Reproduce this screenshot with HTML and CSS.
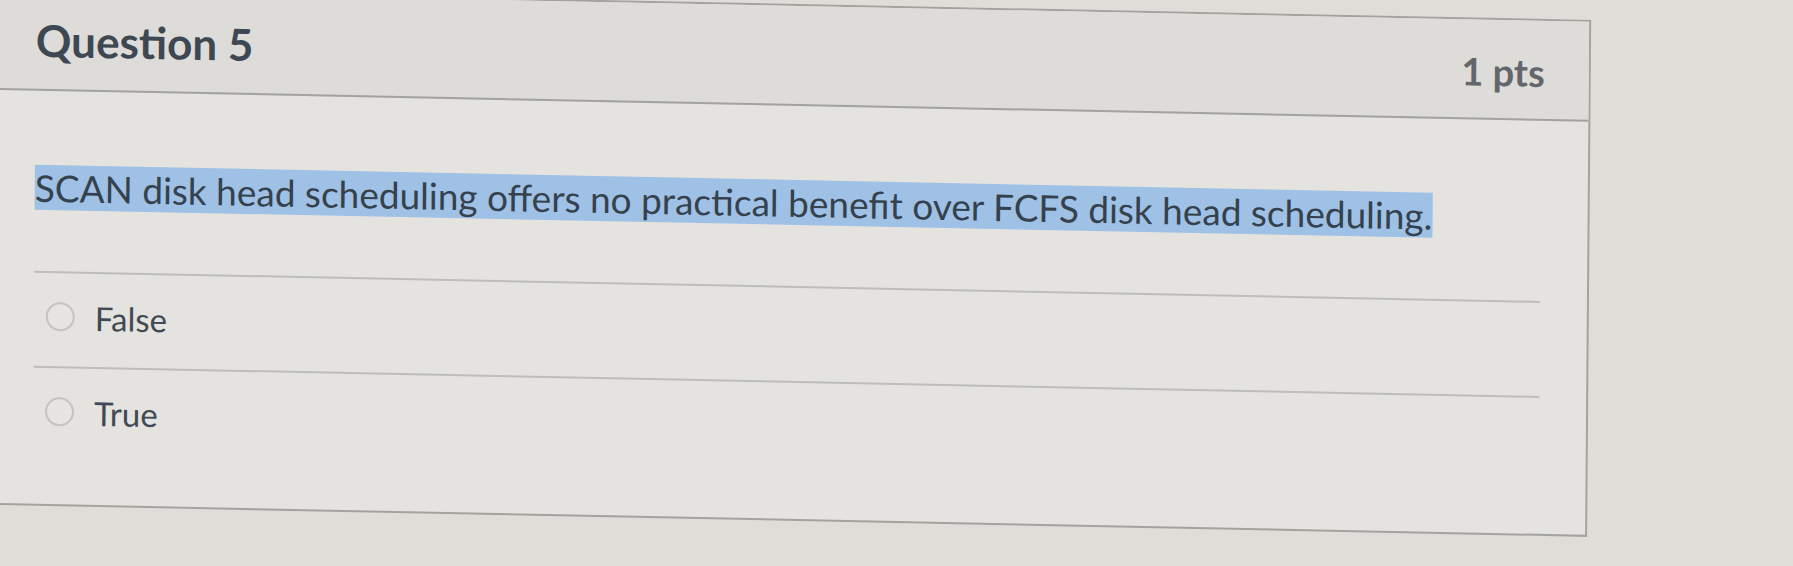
FILE: index.html
```html
<!DOCTYPE html>
<html lang="en">
<head>
    <meta charset="UTF-8">
    <meta name="viewport" content="width=device-width, initial-scale=1.0">
    <title>Quiz: Question 5</title>
    <link rel="stylesheet" href="styles.css">
</head>
<body>
    <!-- Question card -->
    <div class="question">
        <div class="question-header">
            <span class="question-name">Question 5</span>
            <span class="question-points">1 pts</span>
        </div>

        <div class="question-body">
            <p class="question-text"><span class="selected">SCAN disk head scheduling offers no practical benefit over FCFS disk head scheduling.</span></p>

            <div class="answers">
                <label class="answer">
                    <input type="radio" name="question_5" value="false">
                    <span class="answer-label">False</span>
                </label>
                <label class="answer">
                    <input type="radio" name="question_5" value="true">
                    <span class="answer-label">True</span>
                </label>
            </div>
        </div>
    </div>
</body>
</html>
```

FILE: styles.css
```css
body {
    font-family: Lato, "Open Sans", sans-serif;
    margin: 0;
    padding: 0;
    background-color: #e0ddd8;
    height: 566px;
    overflow: hidden;
}
/* Question card */
.question {
    margin: -12px 204px 0 -6px;
    border: 2px solid #a2a2a0;
    background-color: #e4e3df;
    /* the card sits slightly tilted on the page */
    transform-origin: 6px 300px;
    transform: rotate(0.45deg) skewY(0.7deg);
}
.question-header {
    display: flex;
    justify-content: space-between;
    align-items: baseline;
    padding: 23px 44px 23px 38px;
    background-color: #dddcd8;
    border-bottom: 2px solid #a2a2a0;
}
.question-name {
    font-size: 44px;
    font-weight: bold;
    color: #3d4852;
}
.question-points {
    font-size: 38px;
    font-weight: bold;
    color: #63676c;
}
/* Question text and answers */
.question-body {
    padding: 74px 47px 43px 38px;
}
.question-text {
    margin: 0;
    font-size: 37px;
    color: #35424d;
}
.selected {
    background-color: #9fc1e6;
}
.answers {
    margin-top: 61px;
}
.answer {
    display: flex;
    align-items: center;
    height: 87px;
    padding: 0 0 6px 12px;
    border-top: 2px solid #bdbdbb;
    cursor: pointer;
}
.answer input {
    appearance: none;
    -webkit-appearance: none;
    width: 29px;
    height: 29px;
    margin: 0 20px 0 0;
    border: 2px solid #c3c3c1;
    border-radius: 50%;
    background-color: #e6e5e1;
}
.answer-label {
    font-size: 33px;
    color: #3f4a54;
}
```
